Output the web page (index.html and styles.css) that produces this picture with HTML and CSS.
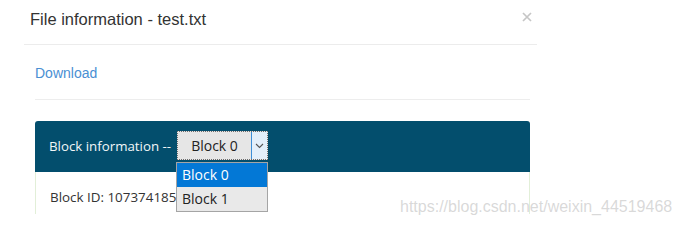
FILE: index.html
```html
<!DOCTYPE html>
<html>
<head>
<meta charset="utf-8">
<link rel="stylesheet" href="styles.css">
</head>
<body>
<div class="modal">
  <div class="modal-header">
    <h4 class="modal-title">File information - test.txt</h4>
    <span class="close" aria-label="Close">
      <svg width="10" height="10" viewBox="0 0 10 10"><path d="M1 1L9 9M9 1L1 9" stroke="#c6c6c6" stroke-width="1.7" fill="none"/></svg>
    </span>
  </div>
  <div class="modal-body">
    <a class="download" href="#">Download</a>
    <div class="divider"></div>
    <div class="panel">
      <div class="panel-heading">
        <span class="panel-label">Block information --</span>
        <div class="select">
          <span class="select-value">Block 0</span>
          <span class="select-arrow">
            <svg width="9" height="6" viewBox="0 0 9 6"><path d="M1 1L4.5 4.5L8 1" stroke="#555" stroke-width="1.1" fill="none"/></svg>
          </span>
          <div class="dropdown">
            <div class="option selected">Block 0</div>
            <div class="option">Block 1</div>
          </div>
        </div>
      </div>
      <div class="panel-body">
        <span class="block-id">Block ID: 1073741852</span>
      </div>
    </div>
  </div>
</div>
<div class="watermark">https://blog.csdn.net/weixin_44519468</div>
</body>
</html>
```
FILE: styles.css
```css
html, body {
  margin: 0;
  padding: 0;
  background: #fff;
}
body {
  width: 683px;
  height: 226px;
  overflow: hidden;
  position: relative;
  font-family: "Liberation Sans", Arial, sans-serif;
}
.modal {
  margin-left: 24px;
  width: 513px;
}
.modal-header {
  display: flex;
  justify-content: space-between;
  align-items: flex-start;
  padding: 9px 5px 15px 6px;
  border-bottom: 1px solid #ececec;
}
.modal-title {
  margin: 0;
  font-size: 16.5px;
  line-height: 20px;
  font-weight: normal;
  color: #333;
}
.close {
  display: block;
  margin-top: 3px;
  width: 10px;
  height: 10px;
}
.close svg { display: block; }
.modal-body {
  padding: 18px 7px 0 11px;
}
.download {
  display: block;
  font-size: 14px;
  line-height: 20px;
  color: #4a8fd3;
  text-decoration: none;
}
.divider {
  margin-top: 16px;
  height: 1px;
  background: #ededed;
}
.panel {
  margin-top: 21px;
  font-family: "Open Sans", "Noto Sans", sans-serif;
}
.panel-heading {
  display: flex;
  align-items: center;
  height: 51px;
  box-sizing: border-box;
  padding: 10px 14px 12px 14px;
  background: #034e6d;
  border-radius: 3px 3px 0 0;
}
.panel-label {
  color: #f2f6f8;
  font-size: 13.3px;
  width: 128px;
}
.select {
  position: relative;
  display: flex;
  width: 91px;
  height: 29px;
  box-sizing: border-box;
  border: 1px dotted #6d6d6d;
  background: #e6e6e6;
}
.select-value {
  flex: 1;
  display: flex;
  align-items: center;
  justify-content: center;
  color: #222;
  font-size: 14px;
}
.select-arrow {
  width: 15px;
  display: flex;
  align-items: center;
  justify-content: center;
  background: #e3effa;
  border-left: 1px solid #3c8fd8;
}
.select-arrow svg { display: block; }
.dropdown {
  position: absolute;
  left: -2px;
  top: 30px;
  width: 92px;
  box-sizing: border-box;
  border: 1px solid #a5a5a5;
  background: #e9e9e9;
  z-index: 2;
}
.option {
  height: 24px;
  line-height: 24px;
  padding-left: 5px;
  font-size: 14px;
  color: #222;
}
.option.selected {
  background: #0378d6;
  color: #fff;
}
.panel-body {
  height: 42px;
  box-sizing: border-box;
  padding: 13px 14px 0 14px;
  border-left: 1px solid #e2efd8;
  border-right: 1px solid #e2efd8;
}
.block-id {
  font-size: 13.4px;
  line-height: 20px;
  color: #333;
}
.watermark {
  position: absolute;
  left: 400px;
  top: 198px;
  font-family: "Liberation Sans", Arial, sans-serif;
  font-size: 16px;
  line-height: 18px;
  color: rgba(185, 185, 185, 0.55);
  white-space: nowrap;
}
```
